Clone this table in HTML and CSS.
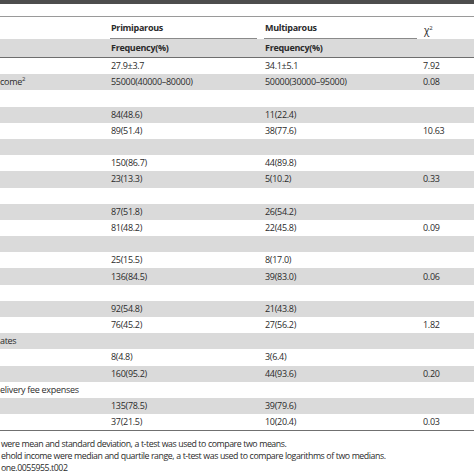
FILE: index.html
```html
<!DOCTYPE html>
<html>
<head>
<meta charset="utf-8">
<link rel="stylesheet" href="styles.css">
</head>
<body>
<div class="page">
  <div class="topbar"></div>
  <div class="table">
    <div class="row head1">
      <div class="cell"></div>
      <div class="cell hcell"><div class="hline">Primiparous</div></div>
      <div class="cell hcell"><div class="hline">Multiparous</div></div>
      <div class="cell chi">χ<sup class="sup">2</sup></div>
    </div>
    <div class="row head2">
      <div class="cell"></div>
      <div class="cell c2 bold">Frequency(%)</div>
      <div class="cell c3 bold">Frequency(%)</div>
      <div class="cell c4"></div>
    </div>
    <div class="body">
      <div class="row"><div class="cell c1"></div><div class="cell c2">27.9±3.7</div><div class="cell c3">34.1±5.1</div><div class="cell c4">7.92</div></div>
      <div class="row alt"><div class="cell c1 lab">come<sup class="sup">2</sup></div><div class="cell c2">55000(40000–80000)</div><div class="cell c3">50000(30000–95000)</div><div class="cell c4">0.08</div></div>
      <div class="row"><div class="cell c1"></div><div class="cell c2"></div><div class="cell c3"></div><div class="cell c4"></div></div>
      <div class="row alt"><div class="cell c1"></div><div class="cell c2">84(48.6)</div><div class="cell c3">11(22.4)</div><div class="cell c4"></div></div>
      <div class="row"><div class="cell c1"></div><div class="cell c2">89(51.4)</div><div class="cell c3">38(77.6)</div><div class="cell c4">10.63</div></div>
      <div class="row alt"><div class="cell c1"></div><div class="cell c2"></div><div class="cell c3"></div><div class="cell c4"></div></div>
      <div class="row"><div class="cell c1"></div><div class="cell c2">150(86.7)</div><div class="cell c3">44(89.8)</div><div class="cell c4"></div></div>
      <div class="row alt"><div class="cell c1"></div><div class="cell c2">23(13.3)</div><div class="cell c3">5(10.2)</div><div class="cell c4">0.33</div></div>
      <div class="row"><div class="cell c1"></div><div class="cell c2"></div><div class="cell c3"></div><div class="cell c4"></div></div>
      <div class="row alt"><div class="cell c1"></div><div class="cell c2">87(51.8)</div><div class="cell c3">26(54.2)</div><div class="cell c4"></div></div>
      <div class="row"><div class="cell c1"></div><div class="cell c2">81(48.2)</div><div class="cell c3">22(45.8)</div><div class="cell c4">0.09</div></div>
      <div class="row alt"><div class="cell c1"></div><div class="cell c2"></div><div class="cell c3"></div><div class="cell c4"></div></div>
      <div class="row"><div class="cell c1"></div><div class="cell c2">25(15.5)</div><div class="cell c3">8(17.0)</div><div class="cell c4"></div></div>
      <div class="row alt"><div class="cell c1"></div><div class="cell c2">136(84.5)</div><div class="cell c3">39(83.0)</div><div class="cell c4">0.06</div></div>
      <div class="row"><div class="cell c1"></div><div class="cell c2"></div><div class="cell c3"></div><div class="cell c4"></div></div>
      <div class="row alt"><div class="cell c1"></div><div class="cell c2">92(54.8)</div><div class="cell c3">21(43.8)</div><div class="cell c4"></div></div>
      <div class="row"><div class="cell c1"></div><div class="cell c2">76(45.2)</div><div class="cell c3">27(56.2)</div><div class="cell c4">1.82</div></div>
      <div class="row alt"><div class="cell c1 lab">ates</div><div class="cell c2"></div><div class="cell c3"></div><div class="cell c4"></div></div>
      <div class="row"><div class="cell c1"></div><div class="cell c2">8(4.8)</div><div class="cell c3">3(6.4)</div><div class="cell c4"></div></div>
      <div class="row alt"><div class="cell c1"></div><div class="cell c2">160(95.2)</div><div class="cell c3">44(93.6)</div><div class="cell c4">0.20</div></div>
      <div class="row"><div class="cell c1 lab">elivery fee expenses</div><div class="cell c2"></div><div class="cell c3"></div><div class="cell c4"></div></div>
      <div class="row alt"><div class="cell c1"></div><div class="cell c2">135(78.5)</div><div class="cell c3">39(79.6)</div><div class="cell c4"></div></div>
      <div class="row"><div class="cell c1"></div><div class="cell c2">37(21.5)</div><div class="cell c3">10(20.4)</div><div class="cell c4">0.03</div></div>
    </div>
  </div>
  <div class="notes">
    <p class="note">were mean and standard deviation, a t-test was used to compare two means.</p>
    <p class="note">ehold income were median and quartile range, a t-test was used to compare logarithms of two medians.</p>
    <p class="note">one.0055955.t002</p>
  </div>
</div>
</body>
</html>
```
FILE: styles.css
```css
html, body {
  margin: 0;
  padding: 0;
  background: #ffffff;
}
.page {
  width: 474px;
  height: 474px;
  overflow: hidden;
  font-family: "Open Sans", "Noto Sans", sans-serif;
  font-size: 9px;
  letter-spacing: -0.3px;
  color: #2b2b2b;
}
.topbar {
  height: 4px;
  background: #4d4d4d;
  margin-bottom: 12px;
}
.table {
  border-top: 1px solid #9a9a9a;
  border-bottom: 1.5px solid #707070;
}
.row {
  display: grid;
  grid-template-columns: 107px 154px 160px 1fr;
  height: 16.2px;
  align-items: center;
  white-space: nowrap;
}
.row.alt {
  background: #dadada;
}
.cell {
  line-height: 12px;
}
.head1 {
  height: 22px;
  align-items: end;
}
.hcell {
  padding: 0 4px 0 3px;
}
.hline {
  font-weight: 700;
  padding: 0 0 4px 1px;
  border-bottom: 1px solid #8a8a8a;
}
.chi {
  padding: 0 0 3px 3px;
  font-size: 10px;
}
.head2 {
  height: 18px;
  background: #dadada;
  border-bottom: 1.5px solid #6e6e6e;
}
.bold {
  font-weight: 700;
}
.c1 {
  padding-left: 0;
}
.c2, .c3 {
  padding-left: 4px;
}
.c4 {
  padding-left: 2px;
}
.sup {
  font-size: 6px;
  line-height: 0;
  vertical-align: 4px;
}
.notes {
  padding-top: 7px;
}
.note {
  margin: 0;
  font-size: 8.8px;
  line-height: 12px;
  letter-spacing: -0.45px;
  word-spacing: 0.2px;
  padding-left: 1px;
  white-space: nowrap;
}
```
